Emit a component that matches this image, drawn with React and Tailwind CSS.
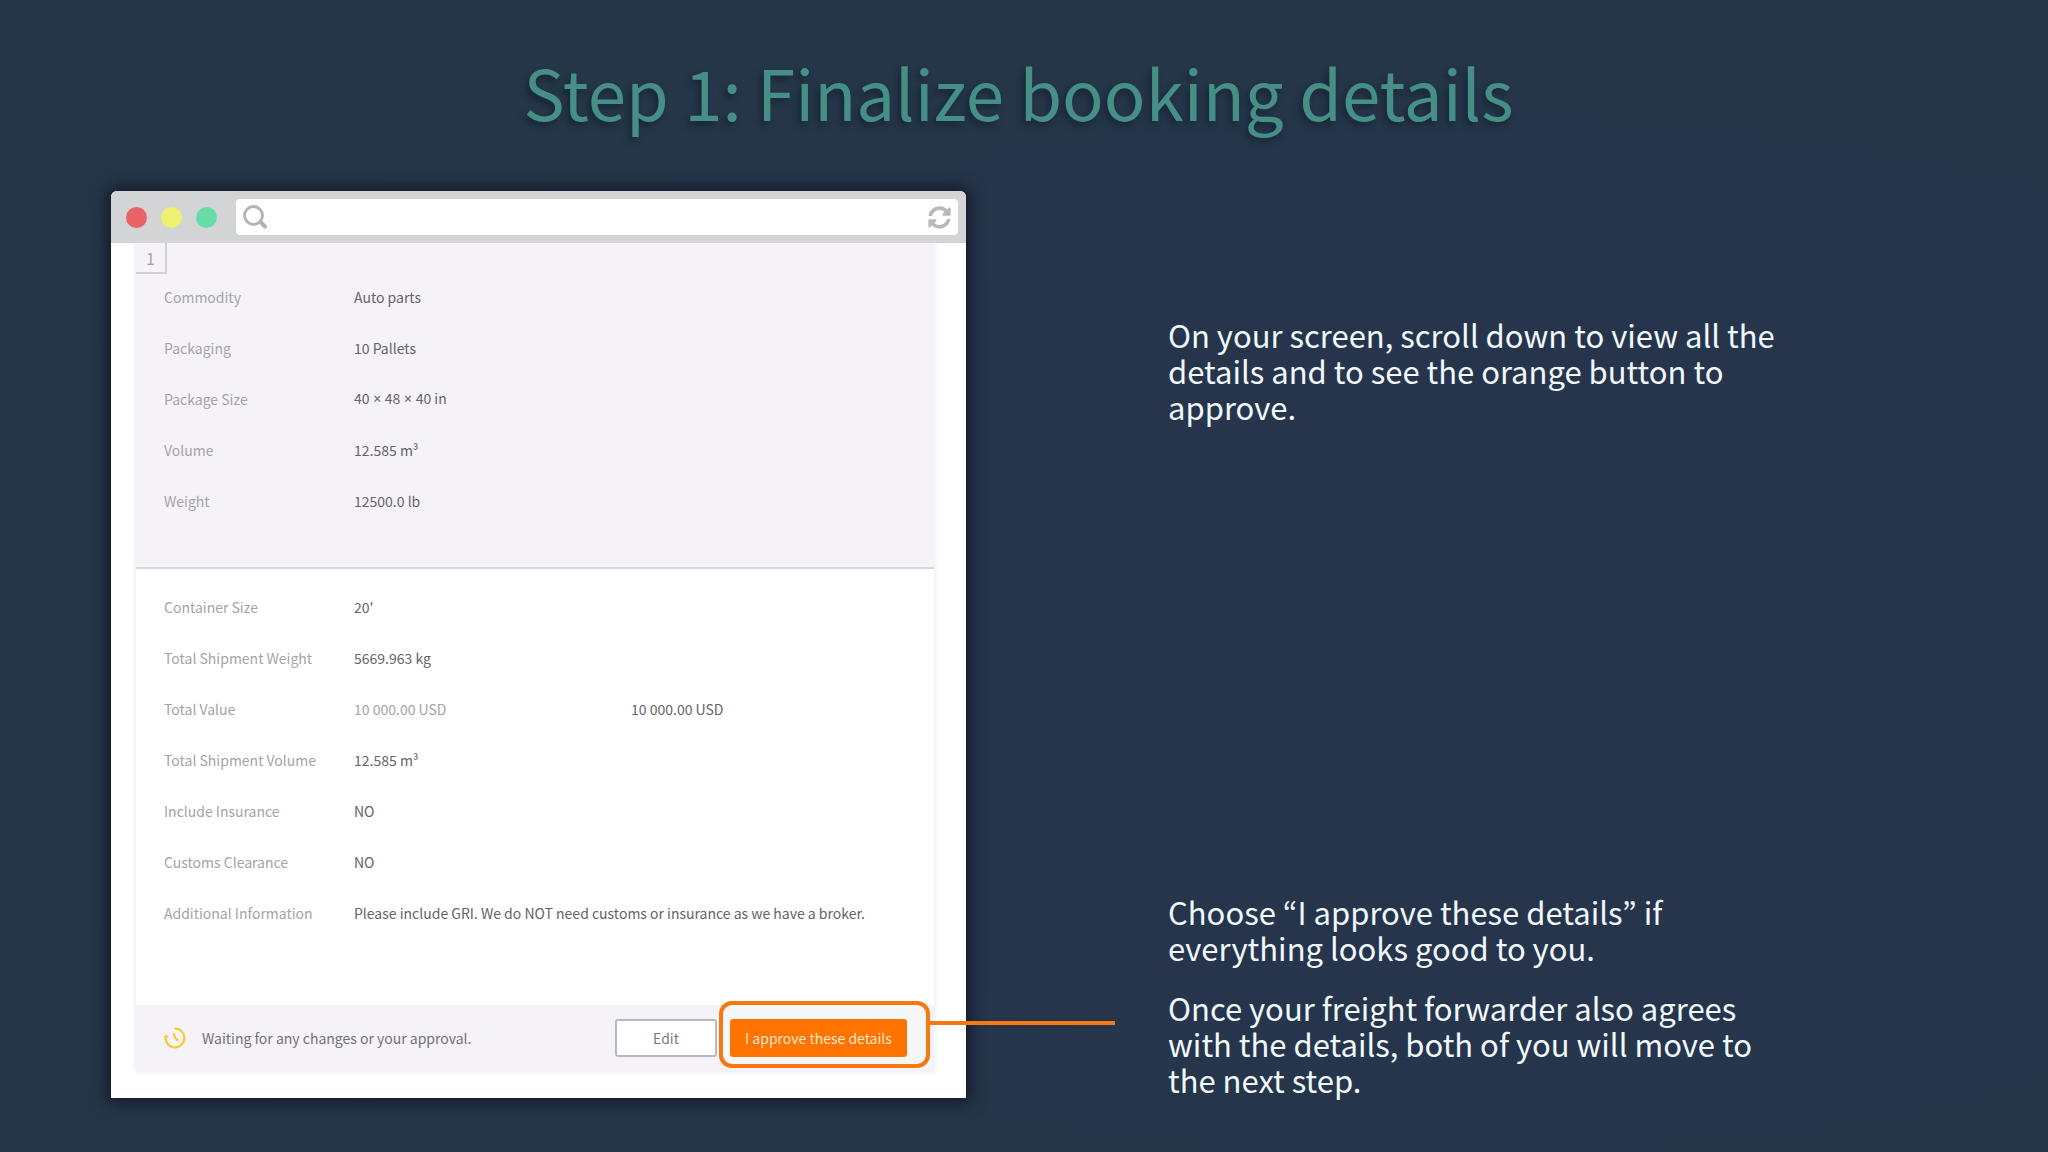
import React from "react";
import { FaSyncAlt } from "react-icons/fa";

function Times() {
  return <span className="font-['Noto_Sans',sans-serif]"> × </span>;
}

const cargo = [
  { label: "Commodity", value: "Auto parts" },
  { label: "Packaging", value: "10 Pallets" },
  { label: "Package Size", value: <>40<Times />48<Times />40 in</> },
  { label: "Volume", value: "12.585 m³" },
  { label: "Weight", value: "12500.0 lb" },
];

const shipment = [
  { label: "Container Size", value: "20'" },
  { label: "Total Shipment Weight", value: "5669.963 kg" },
  { label: "Total Value", value: "10 000.00 USD", updated: "10 000.00 USD" },
  { label: "Total Shipment Volume", value: "12.585 m³" },
  { label: "Include Insurance", value: "NO" },
  { label: "Customs Clearance", value: "NO" },
  {
    label: "Additional Information",
    value: "Please include GRI. We do NOT need customs or insurance as we have a broker.",
  },
];

function DetailsTable({ rows, name }) {
  return (
    <table aria-label={name} className="w-full table-fixed text-left text-sm leading-5">
      <colgroup>
        <col className="w-[190px]" />
        <col className="w-[277px]" />
        <col />
      </colgroup>
      <tbody>
        {rows.map((row) => (
          <tr key={row.label} className="h-[51px]">
            <th scope="row" className="whitespace-nowrap font-normal text-[#a5a3a7]">
              {row.label}
            </th>
            {row.updated ? (
              <>
                <td className="text-[#a5a3a7]">{row.value}</td>
                <td className="text-[#666468]">{row.updated}</td>
              </>
            ) : (
              <td colSpan={2} className="whitespace-nowrap text-[#666468]">
                {row.value}
              </td>
            )}
          </tr>
        ))}
      </tbody>
    </table>
  );
}

function SearchIcon() {
  return (
    <svg viewBox="0 0 24 24" className="h-6 w-6 shrink-0" fill="none" stroke="#b3b3b5" aria-hidden="true">
      <circle cx="10.5" cy="10.5" r="9" strokeWidth="2.8" />
      <path d="M17.5 17 L22 21.5" strokeWidth="4" strokeLinecap="round" />
    </svg>
  );
}

function WaitingIcon() {
  return (
    <svg viewBox="0 0 22 22" className="h-[22px] w-[22px] shrink-0" fill="none" stroke="#f9c937" strokeWidth="2.2" strokeLinecap="round" aria-hidden="true">
      <path d="M11.5 1.6 A9.4 9.4 0 1 1 1.8 9" />
      <path d="M0.9 10.2 L2.2 8.6 L3.6 10.2" strokeWidth="1.4" />
      <path d="M10 6.8 L11 10.5 L13.5 13.2" />
    </svg>
  );
}

function BrowserWindow() {
  return (
    <section className="min-w-0 rounded-t-md bg-white shadow-[0_0_16px_4px_rgba(12,14,30,0.75)]">
      <header className="flex h-[52px] items-center rounded-t-md bg-[#d3d4d6] pr-2 pl-[15px]">
        <div className="flex gap-[14px]">
          <span className="h-[21px] w-[21px] rounded-full bg-[#e96264]" />
          <span className="h-[21px] w-[21px] rounded-full bg-[#eef06f]" />
          <span className="h-[21px] w-[21px] rounded-full bg-[#66dda7]" />
        </div>
        <div className="ml-[19px] flex h-9 flex-1 items-center rounded-sm bg-white px-[7px]">
          <SearchIcon />
          <input aria-label="Address" className="mx-2 min-w-0 flex-1 bg-transparent text-sm outline-none" />
          <button aria-label="Reload" className="text-[#b9b9bb]">
            <FaSyncAlt size={23} />
          </button>
        </div>
      </header>

      <div className="pr-8 pb-[22px] pl-[25px]">
        <article className="shadow-[0_0_4px_1px_rgba(225,220,228,0.6)]">
          <div className="border-b-2 border-[#d9d8dc] bg-[#f5f3f7] pb-[41px]">
            <div className="-mb-[3px] flex h-[31px] w-[31px] items-center justify-center border-r-2 border-b-2 border-[#d0cfd3] text-base leading-5 text-[#a5a3a7]">
              1
            </div>
            <div className="pl-7">
              <DetailsTable rows={cargo} name="Cargo details" />
            </div>
          </div>

          <div className="bg-white pt-3 pb-[67px] pl-7">
            <DetailsTable rows={shipment} name="Shipment details" />
          </div>

          <footer className="flex h-[66px] items-center bg-[#f5f3f7] pr-[27px] pl-7">
            <WaitingIcon />
            <p className="ml-4 flex-1 text-sm leading-5 text-[#737175]">
              Waiting for any changes or your approval.
            </p>
            <button className="h-[38px] w-[102px] rounded-[3px] border-2 border-[#bab8be] bg-white text-sm leading-5 text-[#7b797e]">
              Edit
            </button>
            <div className="relative ml-[13px]">
              <div className="absolute -top-[18px] -right-[23px] -bottom-[11px] -left-[11px] rounded-[13px] border-4 border-[#f8780f] bg-[#f6f7f8]" />
              <div className="absolute top-[2px] left-full ml-[23px] h-1 w-[185px] bg-[#f8780f]" />
              <button className="relative block h-[38px] w-[177px] rounded-[3px] bg-[#ff7300] text-sm leading-5 text-[#ffe6cf]">
                I approve these details
              </button>
            </div>
          </footer>
        </article>
      </div>
    </section>
  );
}

export default function App() {
  return (
    <main className="min-h-screen bg-[radial-gradient(ellipse_at_70%_55%,#26354c_40%,#253747_80%)] pb-14 font-['Noto_Sans_CJK_KR','Noto_Sans',sans-serif]">
      <h1 className="pt-[46px] pr-[11px] text-center text-[69px] leading-[90px] text-[#468f86] [text-shadow:-3px_4px_6px_rgba(10,20,35,0.5)]">
        Step 1: Finalize booking details
      </h1>

      <div className="mt-[55px] grid grid-cols-[855fr_202fr_880fr] pl-[111px]">
        <BrowserWindow />
        <div />
        <div className="flex flex-col gap-[469px] pt-[126px] text-[31px] leading-9 text-[#f1f8fc]">
          <p>
            On your screen, scroll down to view all the
            <br />
            details and to see the orange button to
            <br />
            approve.
          </p>
          <div className="flex flex-col gap-6">
            <p>
              Choose “I approve these details” if
              <br />
              everything looks good to you.
            </p>
            <p>
              Once your freight forwarder also agrees
              <br />
              with the details, both of you will move to
              <br />
              the next step.
            </p>
          </div>
        </div>
      </div>
    </main>
  );
}
